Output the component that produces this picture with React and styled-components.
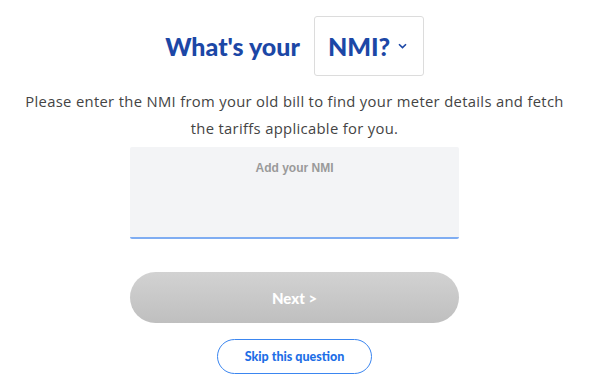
import styled, { createGlobalStyle } from "styled-components";

const GlobalStyle = createGlobalStyle`
  body {
    margin: 0;
    background: #fff;
    font-family: "Open Sans", "Lato", sans-serif;
  }
`;

const Page = styled.div`
  width: 589px;
  height: 389px;
  display: flex;
  flex-direction: column;
  align-items: center;
  padding-top: 16px;
  box-sizing: border-box;
`;

const Heading = styled.div`
  display: flex;
  align-items: center;
  gap: 14px;
  color: #1c47a6;
  font-family: "Lato", sans-serif;
  font-weight: 900;
  font-size: 25px;
`;

const Select = styled.div`
  width: 110px;
  height: 60px;
  box-sizing: border-box;
  border: 1px solid #dcdcdc;
  border-radius: 3px;
  display: flex;
  align-items: center;
  padding-left: 13px;
  gap: 8px;
`;

const Description = styled.p`
  margin: 12px 0 0;
  width: 558px;
  text-align: center;
  color: #444;
  font-family: "Open Sans", sans-serif;
  font-size: 14.8px;
  letter-spacing: 0.32px;
  line-height: 27px;
`;

const Input = styled.input`
  margin-top: 5px;
  width: 329px;
  height: 92px;
  box-sizing: border-box;
  border: none;
  border-bottom: 2px solid #7fadf2;
  border-radius: 2px;
  background: #f3f4f6;
  text-align: center;
  padding: 0 0 48px;
  font-family: "Liberation Sans", Arial, sans-serif;
  font-weight: bold;
  font-size: 12px;
  outline: none;
  &::placeholder {
    color: #9a9a9a;
  }
`;

const NextButton = styled.button`
  margin-top: 33px;
  width: 329px;
  height: 51px;
  border: none;
  border-radius: 26px;
  background: linear-gradient(#d2d2d2, #bfbfbf);
  color: #fff;
  font-family: "Lato", sans-serif;
  font-weight: 900;
  font-size: 15px;
`;

const SkipButton = styled.button`
  margin-top: 16px;
  width: 155px;
  height: 35px;
  border: 1px solid #3b86f0;
  border-radius: 18px;
  background: #fff;
  color: #1d6ee6;
  font-family: "Lato", sans-serif;
  font-weight: 900;
  font-size: 12.5px;
`;

export default function App() {
  return (
    <>
      <GlobalStyle />
      <Page>
        <Heading>
          <span>What's your</span>
          <Select>
            <span>NMI?</span>
            <svg width="9" height="6" viewBox="0 0 9 6">
              <path d="M1 1.2 4.5 4.6 8 1.2" fill="none" stroke="#1c47a6" strokeWidth="1.6" />
            </svg>
          </Select>
        </Heading>
        <Description>
          Please enter the NMI from your old bill to find your meter details and fetch the tariffs applicable for you.
        </Description>
        <Input placeholder="Add your NMI" />
        <NextButton>Next &gt;</NextButton>
        <SkipButton>Skip this question</SkipButton>
      </Page>
    </>
  );
}
